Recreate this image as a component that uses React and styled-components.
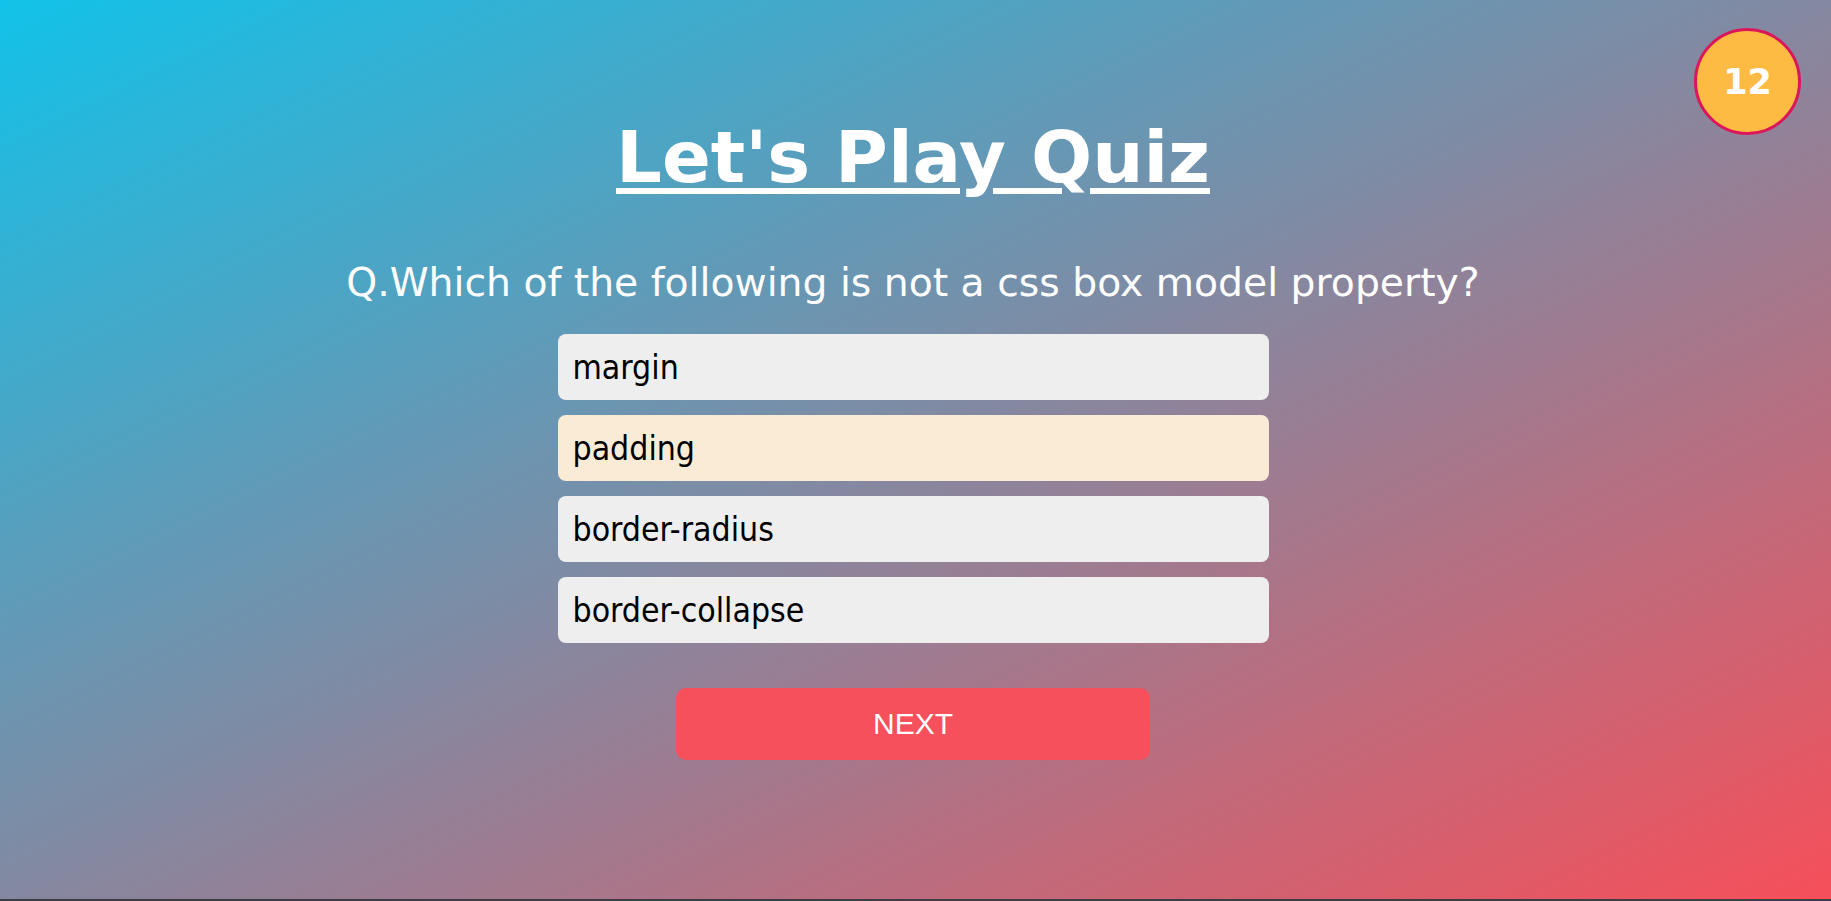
import styled, { createGlobalStyle } from "styled-components";

const GlobalStyle = createGlobalStyle`
  html, body {
    margin: 0;
    padding: 0;
    background: #3d3d46;
  }
  * {
    box-sizing: border-box;
  }
`;

const Page = styled.main`
  position: relative;
  height: calc(100vh - 2px);
  padding-right: 5px;
  display: flex;
  flex-direction: column;
  align-items: center;
  background: linear-gradient(to bottom right, #12c2e9, #f64f59);
  font-family: "DejaVu Sans", Verdana, sans-serif;
  color: #fff;
`;

const Timer = styled.div`
  position: absolute;
  top: 28px;
  right: 30px;
  width: 107px;
  height: 107px;
  border-radius: 50%;
  border: 3px solid #dc165a;
  background: #fdbb44;
  display: flex;
  align-items: center;
  justify-content: center;
  font-size: 35px;
  font-weight: bold;
`;

const Title = styled.h1`
  margin: 115px 0 0;
  font-size: 72px;
  font-weight: bold;
  text-decoration: underline;
  text-decoration-thickness: 6px;
  text-underline-offset: 6px;
`;

const Question = styled.h2`
  margin: 61px 0 0;
  font-size: 39.3px;
  font-weight: normal;
`;

const Options = styled.ul`
  list-style: none;
  margin: 29px 0 0;
  padding: 0;
  width: 711px;
  display: flex;
  flex-direction: column;
  gap: 15px;
`;

const Option = styled.li`
  height: 66px;
  display: flex;
  align-items: center;
  padding-left: 15px;
  border-radius: 8px;
  background: ${({ $selected }) => ($selected ? "#faebd7" : "#eeeeee")};
  color: #000;
  font-size: 33.5px;
  font-stretch: condensed;
  cursor: pointer;
`;

const NextButton = styled.button`
  margin-top: 45px;
  width: 474px;
  height: 72px;
  border: none;
  border-radius: 10px;
  background: #f6505c;
  color: #fff;
  font-family: "Liberation Sans", Arial, sans-serif;
  font-size: 30px;
  cursor: pointer;
`;

const options = ["margin", "padding", "border-radius", "border-collapse"];

export default function App() {
  const selected = 1;

  return (
    <>
      <GlobalStyle />
      <Page>
        <Timer>12</Timer>
        <Title>Let's Play Quiz</Title>
        <Question>Q.Which of the following is not a css box model property?</Question>
        <Options>
          {options.map((opt, i) => (
            <Option key={opt} $selected={i === selected}>
              {opt}
            </Option>
          ))}
        </Options>
        <NextButton>NEXT</NextButton>
      </Page>
    </>
  );
}
